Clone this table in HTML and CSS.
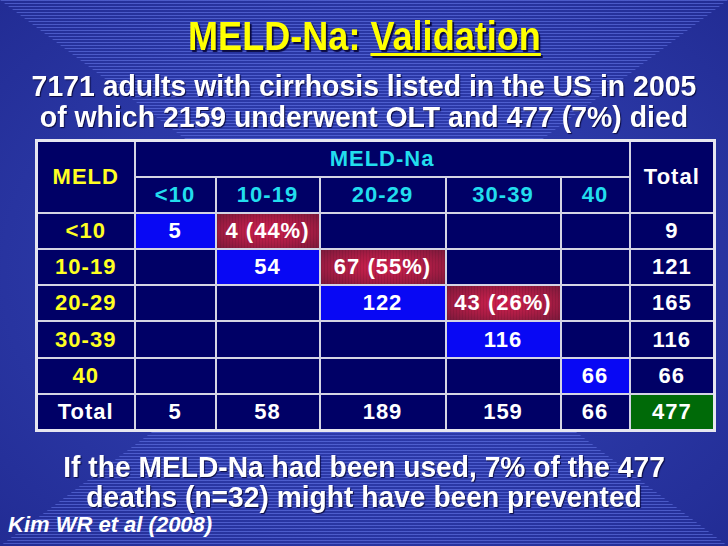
FILE: index.html
```html
<!DOCTYPE html>
<html>
<head>
<meta charset="utf-8">
<link rel="stylesheet" href="styles.css">
</head>
<body>
<div class="slide">
  <div class="bg-h"></div>
  <div class="bg-v"></div>
  <div class="content">
    <h1 class="title">MELD-Na: <span class="ul">Validation</span></h1>
    <p class="sub">7171 adults with cirrhosis listed in the US in 2005<br>of which 2159 underwent OLT and 477 (7%) died</p>
    <table class="grid">
      <colgroup>
        <col class="c0"><col class="c1"><col class="c2"><col class="c3"><col class="c4"><col class="c5"><col class="c6">
      </colgroup>
      <tr>
        <td rowspan="2" class="lab">MELD</td>
        <td colspan="5" class="hd">MELD-Na</td>
        <td rowspan="2">Total</td>
      </tr>
      <tr>
        <td class="hd">&lt;10</td><td class="hd">10-19</td><td class="hd">20-29</td><td class="hd">30-39</td><td class="hd">40</td>
      </tr>
      <tr>
        <td class="lab">&lt;10</td><td class="blue">5</td><td class="red">4 (44%)</td><td></td><td></td><td></td><td>9</td>
      </tr>
      <tr>
        <td class="lab">10-19</td><td></td><td class="blue">54</td><td class="red">67 (55%)</td><td></td><td></td><td>121</td>
      </tr>
      <tr>
        <td class="lab">20-29</td><td></td><td></td><td class="blue">122</td><td class="red">43 (26%)</td><td></td><td>165</td>
      </tr>
      <tr>
        <td class="lab">30-39</td><td></td><td></td><td></td><td class="blue">116</td><td></td><td>116</td>
      </tr>
      <tr>
        <td class="lab">40</td><td></td><td></td><td></td><td></td><td class="blue">66</td><td>66</td>
      </tr>
      <tr>
        <td>Total</td><td>5</td><td>58</td><td>189</td><td>159</td><td>66</td><td class="green">477</td>
      </tr>
    </table>
    <p class="foot">If the MELD-Na had been used, 7% of the 477<br>deaths (n=32) might have been prevented</p>
    <p class="cite">Kim WR et al (2008)</p>
  </div>
</div>
</body>
</html>
```
FILE: styles.css
```css
html, body {
  margin: 0;
  padding: 0;
}
body {
  width: 728px;
  height: 546px;
  overflow: hidden;
  background: #27309c;
}
.slide {
  position: relative;
  width: 728px;
  height: 546px;
  overflow: hidden;
  background: radial-gradient(ellipse at 50% 50%, #2e3cae 0%, #2b38a6 55%, #222c94 100%);
}
.bg-h, .bg-v {
  position: absolute;
  inset: 0;
}
.bg-h {
  background: repeating-linear-gradient(to bottom, rgba(120,140,255,0.45) 0px, rgba(120,140,255,0.45) 1px, rgba(0,0,0,0) 1px, rgba(0,0,0,0) 3px);
  clip-path: polygon(0 0, 100% 0, 50% 50%, 100% 100%, 0 100%, 50% 50%);
}
.bg-v {
  background: repeating-linear-gradient(to right, rgba(120,140,255,0.45) 0px, rgba(120,140,255,0.45) 1px, rgba(0,0,0,0) 1px, rgba(0,0,0,0) 3px);
  clip-path: polygon(0 0, 50% 50%, 0 100%, 100% 0, 50% 50%, 100% 100%);
}
.content {
  position: relative;
  display: flex;
  flex-direction: column;
  align-items: center;
  font-family: "Liberation Sans", Arial, sans-serif;
  font-weight: bold;
  color: #ffffff;
}
.title {
  margin: 0;
  padding-top: 16px;
  height: 40px;
  line-height: 40px;
  font-size: 41px;
  color: #ffff00;
  text-shadow: 2px 2px 1px #0a0a40;
  font-weight: bold;
  white-space: nowrap;
  transform: scaleX(0.88);
}
.ul {
  text-decoration: underline;
  text-decoration-thickness: 3px;
  text-underline-offset: 3px;
}
.sub {
  margin: 14px 0 0 0;
  font-size: 30px;
  line-height: 31px;
  text-align: center;
  white-space: nowrap;
  transform: scaleX(0.947);
  text-shadow: 1px 1px 1px #0a0a40;
}
.grid {
  margin-top: 7px;
  align-self: flex-start;
  margin-left: 35px;
  width: 678px;
  border-collapse: collapse;
  table-layout: fixed;
  border: 3px solid #e6e6f0;
  font-family: "Liberation Sans", Arial, sans-serif;
  font-size: 22px;
  letter-spacing: 1px;
  background: #000066;
}
.c0 { width: 98px; }
.c1 { width: 81px; }
.c2 { width: 104px; }
.c3 { width: 126px; }
.c4 { width: 115px; }
.c5 { width: 69px; }
.c6 { width: 85px; }
.grid td {
  border: 2px solid #d4d4e4;
  height: 34.1px;
  padding: 0;
  text-align: center;
  vertical-align: middle;
  color: #ffffff;
}
.grid td.lab { color: #ffff22; }
.grid td.hd { color: #22ddee; }
.grid td.blue { background: #0808f4; }
.grid td.green { background: #006a08; }
.grid td.red {
  background:
    repeating-linear-gradient(to right, rgba(0,0,0,0.08) 0px, rgba(0,0,0,0.08) 1px, rgba(0,0,0,0) 1px, rgba(0,0,0,0) 3px),
    radial-gradient(ellipse at 50% 50%, #d0204e 0%, #a81c44 55%, #7c1a3c 100%);
}
.foot {
  margin: 20px 0 0 0;
  font-size: 30px;
  line-height: 30px;
  text-align: center;
  white-space: nowrap;
  transform: scaleX(0.94);
  text-shadow: 1px 1px 1px #0a0a40;
}
.cite {
  align-self: flex-start;
  margin: 2px 0 0 8px;
  font-size: 22px;
  line-height: 22px;
  font-style: italic;
}
```
